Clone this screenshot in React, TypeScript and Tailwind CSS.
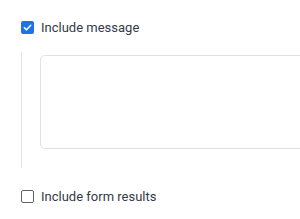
import React from "react";

export default function App() {
  return (
    <div className="w-[300px] h-[219px] bg-white overflow-hidden" style={{ fontFamily: "Roboto, 'Liberation Sans', sans-serif" }}>
      <div className="pl-[21px] pt-[20px]">
        <label className="flex items-center gap-[7px] h-[14px]">
          <span className="w-[13px] h-[13px] rounded-[2px] bg-[#1a73e8] flex items-center justify-center">
            <svg width="9" height="9" viewBox="0 0 10 10" fill="none">
              <path d="M1.5 5.2 L4 7.6 L8.6 2.6" stroke="white" strokeWidth="1.7" strokeLinecap="round" strokeLinejoin="round" />
            </svg>
          </span>
          <span className="text-[13px] text-[#343a48] leading-none">Include message</span>
        </label>
        <div className="mt-[18px] border-l border-[#e3e3ec] pl-[18px] pt-[3px] h-[116px]">
          <div className="w-[300px] h-[94px] border border-[#e0e0ea] rounded-[5px] bg-white" />
        </div>
        <label className="mt-[21px] flex items-center gap-[7px] h-[14px]">
          <span className="w-[13px] h-[13px] rounded-[2px] border-[1.5px] border-[#5f6368] bg-white" />
          <span className="text-[13px] text-[#343a48] leading-none">Include form results</span>
        </label>
      </div>
    </div>
  );
}
